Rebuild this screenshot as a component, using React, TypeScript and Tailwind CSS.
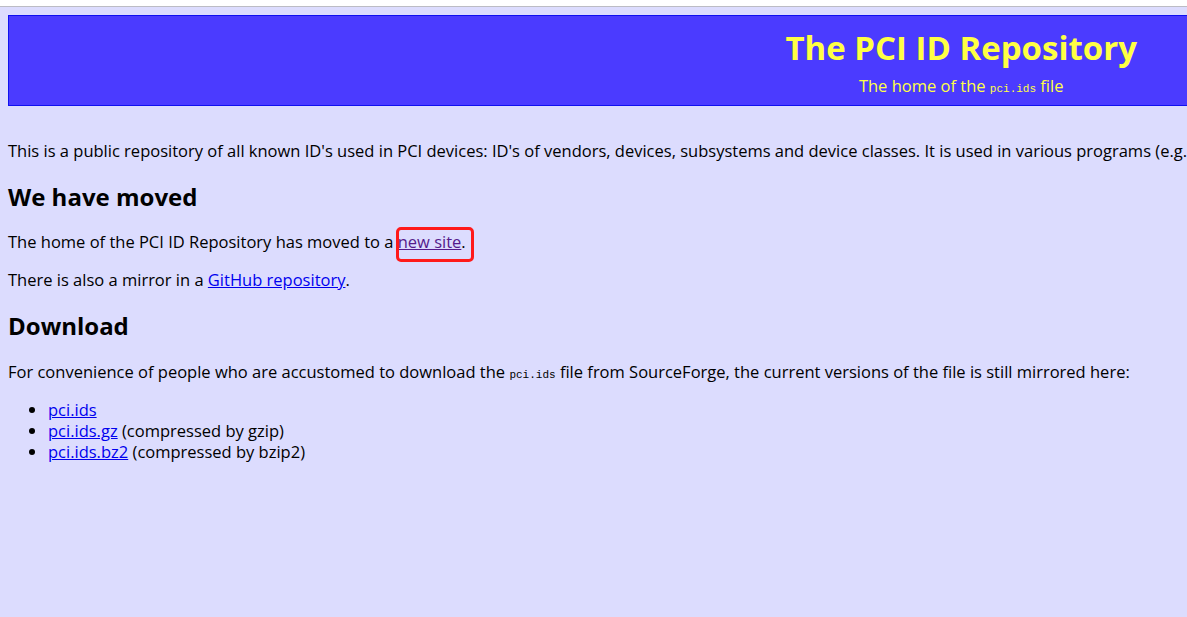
import React from "react";

export default function App() {
  const code = "font-['Liberation_Mono','DejaVu_Sans_Mono',monospace] text-[11px]";
  return (
    <div className="w-[1187px] h-[617px] overflow-hidden bg-white font-['Open_Sans','Noto_Sans',sans-serif] text-[16.5px] text-black">
      <div className="h-[6px] bg-white" />
      <div className="h-[1px] bg-[#bcbcc4]" />
      <div className="w-[1260px] h-[610px] bg-[#dcdcfe] px-2 pt-2">
        <div className="w-[1232px] h-[91px] border border-[#1010f0] bg-[#4b3bff] flex justify-end pr-[102px]">
          <div className="flex flex-col items-center text-[#ffff44]">
            <div className="text-[33px] font-bold leading-[40px] mt-[12px]">The PCI ID Repository</div>
            <div className="text-[16.5px] leading-[20px] mt-[8px]">
              The home of the <span className={code}>pci.ids</span> file
            </div>
          </div>
        </div>
        <p className="mt-[34px] leading-[22px] whitespace-nowrap">
          This is a public repository of all known ID's used in PCI devices: ID's of vendors, devices, subsystems and device classes. It is used in various programs (e.g.
        </p>
        <h2 className="text-[24px] font-bold leading-[30px] mt-[20px]">We have moved</h2>
        <p className="mt-[19px] leading-[22px]">
          The home of the PCI ID Repository has moved to a{" "}
          <a href="#" className="relative inline-block leading-[22px] text-[#551a8b] underline">
            new site
            <span className="absolute left-[-2px] right-[-13px] top-[-4px] h-[35px] border-[3px] border-[#ff1a1a] rounded-[5px] pointer-events-none" />
          </a>
          .
        </p>
        <p className="mt-[16px] leading-[22px]">
          There is also a mirror in a <a href="#" className="text-[#0000ee] underline">GitHub repository</a>.
        </p>
        <h2 className="text-[24px] font-bold leading-[30px] mt-[20px]">Download</h2>
        <p className="mt-[20px] leading-[22px]">
          For convenience of people who are accustomed to download the <span className={code}>pci.ids</span> file from SourceForge, the current versions of the file is still mirrored here:
        </p>
        <ul className="mt-[13px] pl-[40px] list-disc leading-[21px]">
          <li><a href="#" className="text-[#0000ee] underline">pci.ids</a></li>
          <li><a href="#" className="text-[#0000ee] underline">pci.ids.gz</a> (compressed by gzip)</li>
          <li><a href="#" className="text-[#0000ee] underline">pci.ids.bz2</a> (compressed by bzip2)</li>
        </ul>
      </div>
    </div>
  );
}
